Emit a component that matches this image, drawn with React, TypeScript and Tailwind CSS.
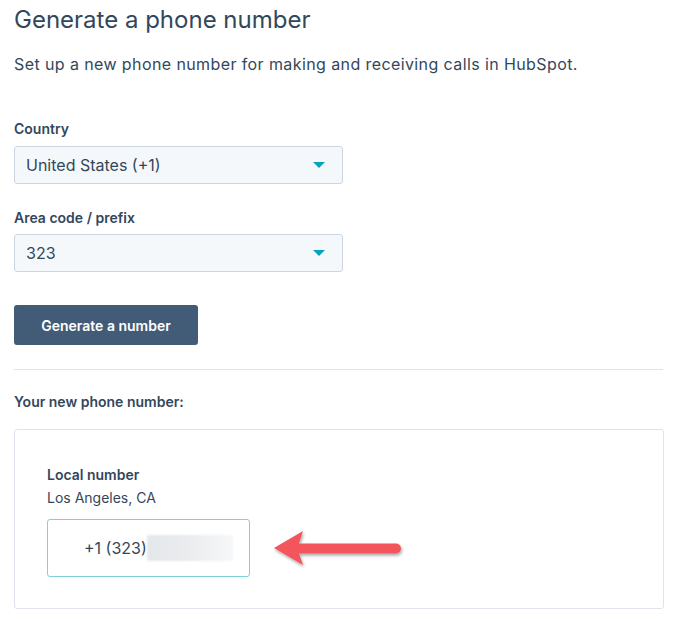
import React from 'react';

const Caret = () => (
  <svg width="14" height="8" viewBox="0 0 14 8" className="shrink-0">
    <path d="M1 1h12L7 7z" fill="#00a4bd" />
  </svg>
);

const SelectBox: React.FC<{ value: string }> = ({ value }) => (
  <div className="flex h-[38px] w-[329px] items-center justify-between rounded-[3px] border border-[#cbd6e2] bg-[#f5f8fa] pl-[11px] pr-[16px] text-[16px] text-[#33475b]">
    <span>{value}</span>
    <Caret />
  </div>
);

const Arrow = () => (
  <svg width="150" height="50" viewBox="0 0 150 50" className="overflow-visible">
    <defs>
      <filter id="sh" x="-20%" y="-40%" width="140%" height="180%">
        <feDropShadow dx="1" dy="2" stdDeviation="1.5" floodColor="#000" floodOpacity="0.35" />
      </filter>
    </defs>
    <g filter="url(#sh)">
      <path d="M33 20.5 L130 20.5 A5 5 0 0 1 130 30.5 L33 30.5 L37 42 L8 25 L37 8 Z" fill="#f2545b" />
    </g>
  </svg>
);

export default function App() {
  return (
    <div className="min-h-[620px] bg-white px-[14px] pt-[4px] text-[#33475b]" style={{ fontFamily: 'Inter, "Noto Sans", sans-serif' }}>
      <h1 className="text-[24px] leading-[32px] font-normal">Generate a phone number</h1>
      <p className="mt-[16px] text-[16px] leading-[24px] tracking-[0.4px]">
        Set up a new phone number for making and receiving calls in HubSpot.
      </p>

      <div className="mt-[43px] text-[14px] leading-[20px] font-semibold">Country</div>
      <div className="mt-[7px]">
        <SelectBox value="United States (+1)" />
      </div>

      <div className="mt-[24px] text-[14px] leading-[20px] font-semibold">Area code / prefix</div>
      <div className="mt-[6px]">
        <SelectBox value="323" />
      </div>

      <button className="mt-[33px] h-[40px] w-[184px] rounded-[3px] bg-[#425b76] text-[14px] font-semibold text-white">
        Generate a number
      </button>

      <div className="mt-[24px] h-px w-[649px] bg-[#dfe3eb]" />

      <div className="mt-[22px] text-[14px] leading-[20px] font-semibold">Your new phone number:</div>

      <div className="mt-[17px] h-[180px] w-[650px] rounded-[3px] border border-[#dfe3eb] pl-[32px] pt-[35px]">
        <div className="text-[14px] leading-[20px] font-semibold">Local number</div>
        <div className="mt-[3px] text-[14px] leading-[20px]">Los Angeles, CA</div>
        <div className="mt-[11px] flex items-center gap-[16px]">
          <div className="flex h-[58px] w-[203px] items-center rounded-[3px] border border-[#7fd1de] pl-[36px] text-[16px]">
            <span>+1 (323)</span>
            <span className="h-[26px] w-[86px] bg-gradient-to-r from-[#e5e8eb] via-[#eaecee] to-[#f6f7f8] blur-[1px]" />
          </div>
          <Arrow />
        </div>
      </div>
    </div>
  );
}
